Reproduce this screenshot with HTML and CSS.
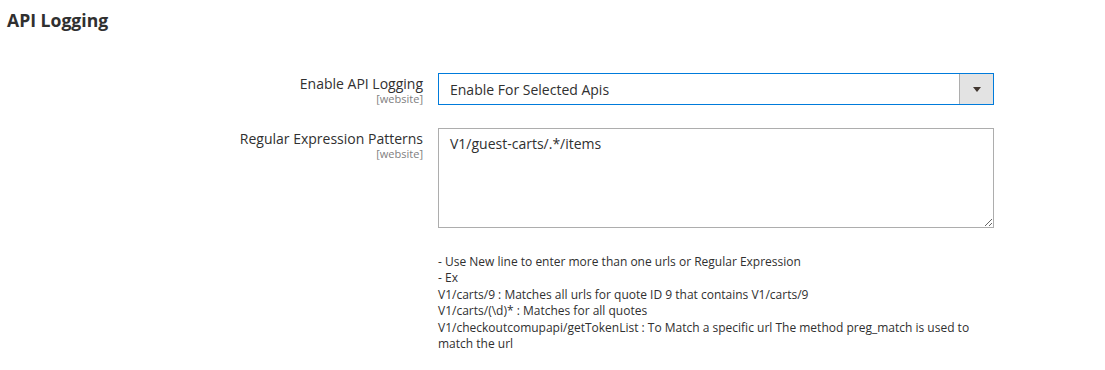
FILE: index.html
```html
<!DOCTYPE html>
<html lang="en">
<head>
  <meta charset="UTF-8" />
  <title>API Logging</title>
  <link rel="stylesheet" href="styles.css">
</head>
<body>
  <h2 class="section-title">API Logging</h2>

  <div class="config">
    <div class="row">
      <div class="label">
        <span>Enable API Logging</span>
        <span class="scope">[website]</span>
      </div>
      <div class="value">
        <div class="select">
          <span class="select-text">Enable For Selected Apis</span>
          <span class="select-arrow"><span class="caret"></span></span>
        </div>
      </div>
    </div>

    <div class="row">
      <div class="label">
        <span>Regular Expression Patterns</span>
        <span class="scope">[website]</span>
      </div>
      <div class="value">
        <textarea class="textarea">V1/guest-carts/.*/items</textarea>
        <div class="note">
          - Use New line to enter more than one urls or Regular Expression<br>
          - Ex<br>
          V1/carts/9 : Matches all urls for quote ID 9 that contains V1/carts/9<br>
          V1/carts/(\d)* : Matches for all quotes<br>
          V1/checkoutcomupapi/getTokenList : To Match a specific url The method preg_match is used to match the url
        </div>
      </div>
    </div>
  </div>
</body>
</html>
```

FILE: styles.css
```css
body { margin: 0; font-family: 'Open Sans', sans-serif; color: #303030; background: #fff; }

.section-title { margin: 0; padding: 8px 0 0 7px; font-size: 17.6px; font-weight: 700; line-height: 25px; color: #303030; }

.config { padding-top: 40px; }
.row { display: grid; grid-template-columns: 423px 556px; column-gap: 15px; margin-bottom: 23px; }

.label { display: flex; flex-direction: column; align-items: flex-end; text-align: right; padding-top: 2px; font-size: 14px; line-height: 18px; color: #303030; }
.label .scope { font-size: 11px; line-height: 12px; color: #808080; }

.select { display: flex; height: 32px; box-sizing: border-box; border: 1px solid #007bdb; background: #fff; }
.select-text { flex: 1; padding: 1px 11px 0; font-size: 14px; line-height: 30px; color: #303030; }
.select-arrow { width: 33px; display: flex; align-items: center; justify-content: center; background: #e3e3e3; border-left: 1px solid #adadad; }
.caret { width: 0; height: 0; border-left: 4px solid transparent; border-right: 4px solid transparent; border-top: 5px solid #41362f; }

.textarea { display: block; width: 556px; height: 100px; box-sizing: border-box; margin: 0; padding: 5px 11px; border: 1px solid #adadad; border-radius: 0; font-family: 'Open Sans', sans-serif; font-size: 14px; line-height: 20px; color: #303030; resize: vertical; outline: none; }

.note { margin-top: 26px; font-size: 12px; line-height: 16.4px; color: #303030; }
```
